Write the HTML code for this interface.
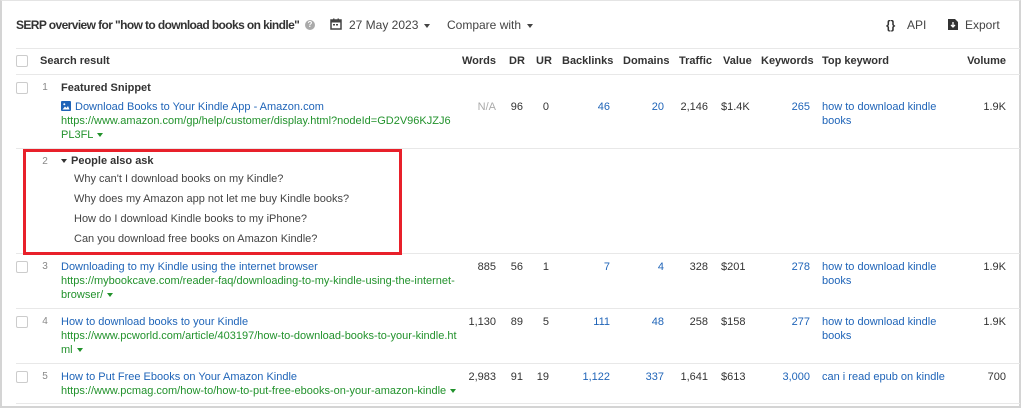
<!DOCTYPE html>
<html><head><meta charset="utf-8"><style>
*{margin:0;padding:0;box-sizing:border-box}
body{width:1024px;height:410px;background:#fff;font-family:"Liberation Sans",Arial,sans-serif;font-size:11px;color:#333;position:relative;overflow:hidden}
.frame{position:absolute;left:0;top:0;width:1021px;height:408px;border:2px solid #d4d4d4;border-top:1px solid #e4e4e4}
.a{position:absolute;white-space:nowrap;line-height:14px}
.r{text-align:right}
.b{font-weight:bold}
.blue{color:#1f64b8}
.green{color:#22922c}
.gray{color:#999}
.line{position:absolute;left:16px;width:1004px;height:1px;background:#e8e8e8}
.cb{position:absolute;left:16px;width:12px;height:12px;border:1px solid #ccc;border-radius:2px;background:#fff}
.num{position:absolute;left:40px;width:10px;text-align:center;color:#888;font-size:10px;line-height:14px}
.tri{display:inline-block;width:0;height:0;border-left:3.5px solid transparent;border-right:3.5px solid transparent;border-top:4px solid currentColor;vertical-align:middle;margin-left:4px}
</style></head><body>
<div class="frame"></div>
<div class="a b" style="left:16px;top:18px;font-size:12px;color:#333;letter-spacing:-0.6px">SERP overview for "how to download books on kindle"</div>
<div style="position:absolute;left:305px;top:20px;width:10px;height:10px;border-radius:50%;background:#aaa;color:#fff;font-size:8px;text-align:center;line-height:10px;font-weight:bold">?</div>
<svg style="position:absolute;left:330px;top:18px" width="12" height="12" viewBox="0 0 12 12"><rect x="1" y="2" width="10" height="9" fill="none" stroke="#444" stroke-width="1.5"/><rect x="1" y="2" width="10" height="2.5" fill="#444"/><rect x="3" y="0.5" width="1.5" height="2.5" fill="#444"/><rect x="7.5" y="0.5" width="1.5" height="2.5" fill="#444"/><rect x="3" y="6" width="2" height="1.5" fill="#444"/><rect x="6" y="6" width="2" height="1.5" fill="#444"/></svg>
<div class="a" style="left:349px;top:18px;font-size:12px;color:#444">27 May 2023<span class="tri" style="margin-left:6px"></span></div>
<div class="a" style="left:447px;top:18px;font-size:12px;color:#444">Compare with<span class="tri" style="margin-left:6px"></span></div>
<div class="a b" style="left:886px;top:18px;font-size:12px;color:#333">{}</div>
<div class="a" style="left:907px;top:18px;font-size:12px;color:#444">API</div>
<svg style="position:absolute;left:948px;top:19px" width="10" height="11" viewBox="0 0 10 11"><path d="M0 0H7L10 3V11H0Z" fill="#333"/><path d="M5 3V8M3 6L5 8L7 6" stroke="#fff" stroke-width="1.3" fill="none"/></svg>
<div class="a" style="left:965px;top:18px;font-size:12px;color:#444">Export</div>
<div class="line" style="top:48px"></div>
<div class="cb" style="top:55px"></div>
<div class="a b" style="left:40px;top:54px">Search result</div>
<div class="a b r" style="left:446px;width:50px;top:54px">Words</div>
<div class="a b" style="left:509px;top:54px">DR</div>
<div class="a b" style="left:536px;top:54px">UR</div>
<div class="a b" style="left:562px;top:54px">Backlinks</div>
<div class="a b" style="left:623px;top:54px">Domains</div>
<div class="a b" style="left:679px;top:54px">Traffic</div>
<div class="a b" style="left:723px;top:54px">Value</div>
<div class="a b" style="left:761px;top:54px">Keywords</div>
<div class="a b" style="left:822px;top:54px">Top keyword</div>
<div class="a b r" style="left:950px;width:56px;top:54px">Volume</div>
<div class="line" style="top:74px"></div>

<div class="cb" style="top:82px"></div><div class="num" style="top:81px">1</div>
<div class="a b" style="left:61px;top:81px">Featured Snippet</div>
<svg style="position:absolute;left:61px;top:101px" width="10" height="10" viewBox="0 0 10 10"><rect width="10" height="10" rx="1" fill="#1f64b8"/><path d="M1.5 8.5L4 5.5L5.5 7L7 5L8.5 8.5Z" fill="#fff"/><circle cx="3.3" cy="3.2" r="1" fill="#fff"/></svg>
<div class="a blue" style="left:75px;top:100px">Download Books to Your Kindle App - Amazon.com</div>
<div class="a green" style="left:61px;top:114px">https://www.amazon.com/gp/help/customer/display.html?nodeId=GD2V96KJZJ6</div>
<div class="a green" style="left:61px;top:128px">PL3FL<span class="tri"></span></div>
<div class="a r gray" style="left:446px;width:50px;top:100px;color:#aaa">N/A</div>
<div class="a r" style="left:500px;width:23px;top:100px">96</div>
<div class="a r" style="left:526px;width:23px;top:100px">0</div>
<div class="a r blue" style="left:560px;width:50px;top:100px">46</div>
<div class="a r blue" style="left:614px;width:50px;top:100px">20</div>
<div class="a r" style="left:668px;width:40px;top:100px">2,146</div>
<div class="a" style="left:721px;top:100px">$1.4K</div>
<div class="a r blue" style="left:760px;width:50px;top:100px">265</div>
<div class="a blue" style="left:822px;top:100px">how to download kindle<br>books</div>
<div class="a r" style="left:950px;width:56px;top:100px">1.9K</div>
<div class="line" style="top:148px"></div>

<div class="num" style="top:155px">2</div>
<div class="a b" style="left:61px;top:154px"><span class="tri" style="margin:0 4px 0 0"></span>People also ask</div>
<div class="a" style="left:74px;top:172px;color:#444">Why can't I download books on my Kindle?</div>
<div class="a" style="left:74px;top:192px;color:#444">Why does my Amazon app not let me buy Kindle books?</div>
<div class="a" style="left:74px;top:212px;color:#444">How do I download Kindle books to my iPhone?</div>
<div class="a" style="left:74px;top:232px;color:#444">Can you download free books on Amazon Kindle?</div>
<div class="line" style="top:253px"></div>
<div style="position:absolute;left:23px;top:149px;width:379px;height:106px;border:3px solid #e8202a"></div>

<div class="cb" style="top:261px"></div><div class="num" style="top:260px">3</div>
<div class="a blue" style="left:61px;top:260px">Downloading to my Kindle using the internet browser</div>
<div class="a green" style="left:61px;top:274px">https://mybookcave.com/reader-faq/downloading-to-my-kindle-using-the-internet-</div>
<div class="a green" style="left:61px;top:288px">browser/<span class="tri"></span></div>
<div class="a r" style="left:446px;width:50px;top:260px">885</div>
<div class="a r" style="left:500px;width:23px;top:260px">56</div>
<div class="a r" style="left:526px;width:23px;top:260px">1</div>
<div class="a r blue" style="left:560px;width:50px;top:260px">7</div>
<div class="a r blue" style="left:614px;width:50px;top:260px">4</div>
<div class="a r" style="left:668px;width:40px;top:260px">328</div>
<div class="a" style="left:721px;top:260px">$201</div>
<div class="a r blue" style="left:760px;width:50px;top:260px">278</div>
<div class="a blue" style="left:822px;top:260px">how to download kindle<br>books</div>
<div class="a r" style="left:950px;width:56px;top:260px">1.9K</div>
<div class="line" style="top:308px"></div>

<div class="cb" style="top:316px"></div><div class="num" style="top:315px">4</div>
<div class="a blue" style="left:61px;top:315px">How to download books to your Kindle</div>
<div class="a green" style="left:61px;top:329px">https://www.pcworld.com/article/403197/how-to-download-books-to-your-kindle.ht</div>
<div class="a green" style="left:61px;top:343px">ml<span class="tri"></span></div>
<div class="a r" style="left:446px;width:50px;top:315px">1,130</div>
<div class="a r" style="left:500px;width:23px;top:315px">89</div>
<div class="a r" style="left:526px;width:23px;top:315px">5</div>
<div class="a r blue" style="left:560px;width:50px;top:315px">111</div>
<div class="a r blue" style="left:614px;width:50px;top:315px">48</div>
<div class="a r" style="left:668px;width:40px;top:315px">258</div>
<div class="a" style="left:721px;top:315px">$158</div>
<div class="a r blue" style="left:760px;width:50px;top:315px">277</div>
<div class="a blue" style="left:822px;top:315px">how to download kindle<br>books</div>
<div class="a r" style="left:950px;width:56px;top:315px">1.9K</div>
<div class="line" style="top:363px"></div>

<div class="cb" style="top:371px"></div><div class="num" style="top:370px">5</div>
<div class="a blue" style="left:61px;top:370px">How to Put Free Ebooks on Your Amazon Kindle</div>
<div class="a green" style="left:61px;top:384px">https://www.pcmag.com/how-to/how-to-put-free-ebooks-on-your-amazon-kindle<span class="tri"></span></div>
<div class="a r" style="left:446px;width:50px;top:370px">2,983</div>
<div class="a r" style="left:500px;width:23px;top:370px">91</div>
<div class="a r" style="left:526px;width:23px;top:370px">19</div>
<div class="a r blue" style="left:560px;width:50px;top:370px">1,122</div>
<div class="a r blue" style="left:614px;width:50px;top:370px">337</div>
<div class="a r" style="left:668px;width:40px;top:370px">1,641</div>
<div class="a" style="left:721px;top:370px">$613</div>
<div class="a r blue" style="left:760px;width:50px;top:370px">3,000</div>
<div class="a blue" style="left:822px;top:370px">can i read epub on kindle</div>
<div class="a r" style="left:950px;width:56px;top:370px">700</div>
<div class="line" style="top:403px"></div>
</body></html>
